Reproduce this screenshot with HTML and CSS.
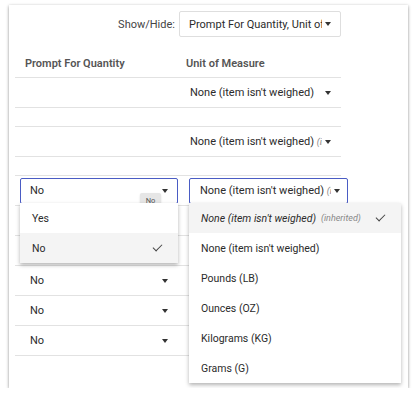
FILE: index.html
```html
<!DOCTYPE html>
<html>
    <head>
        <title>
            Item columns
        </title>
        <link rel="stylesheet" href="styles.css">
    </head>
    <body>

        <div class="card">
            <div class="toolbar">
                <span class="toolbar-label">Show/Hide:</span>
                <div class="picker">
                    <span class="picker-text">Prompt For Quantity, Unit of</span>
                    <span class="caret"></span>
                </div>
            </div>

            <div class="grid">
                <div class="row head">
                    <div class="cell">Prompt For Quantity</div>
                    <div class="cell unit-head">Unit of Measure</div>
                </div>

                <div class="row">
                    <div class="cell"></div>
                    <div class="cell unit">
                        <span class="unit-text">None (item isn't weighed)</span>
                        <span class="caret"></span>
                    </div>
                </div>
                <div class="row short"></div>

                <div class="row">
                    <div class="cell"></div>
                    <div class="cell unit">
                        <span class="unit-text">None (item isn't weighed) <i class="hint">(inherited)</i></span>
                        <span class="caret"></span>
                    </div>
                </div>
                <div class="row short"></div>

                <div class="row active">
                    <div class="select focused qty">
                        <span class="select-text">No</span>
                        <span class="caret"></span>
                    </div>
                    <div class="select focused measure">
                        <span class="select-text">None (item isn't weighed) <i class="hint">(inherited)</i></span>
                        <span class="caret"></span>
                    </div>

                    <div class="tip">No</div>

                    <div class="menu qty-menu">
                        <div class="menu-item">Yes</div>
                        <div class="menu-item picked">No <span class="check"></span></div>
                    </div>

                    <div class="menu measure-menu">
                        <div class="menu-item picked"><i>None (item isn't weighed)</i> <i class="inherited">(inherited)</i> <span class="check"></span></div>
                        <div class="menu-item">None (item isn't weighed)</div>
                        <div class="menu-item">Pounds (LB)</div>
                        <div class="menu-item">Ounces (OZ)</div>
                        <div class="menu-item">Kilograms (KG)</div>
                        <div class="menu-item">Grams (G)</div>
                    </div>
                </div>

                <div class="row"></div>
                <div class="row"></div>

                <div class="row">
                    <div class="select qty"><span class="select-text">No</span><span class="caret"></span></div>
                </div>
                <div class="row">
                    <div class="select qty"><span class="select-text">No</span><span class="caret"></span></div>
                </div>
                <div class="row">
                    <div class="select qty"><span class="select-text">No</span><span class="caret"></span></div>
                </div>
            </div>
        </div>

    </body>
</html>
```

FILE: styles.css
```css
body {
    margin: 0;
    background-color: white;
    font-family: Roboto, "Liberation Sans", sans-serif;
    font-size: 11px;
    color: #2b2b2b;
}
.card {
    box-sizing: border-box;
    width: 399px;
    height: 383px;
    margin: 5px 0 0 9px;
    padding: 6px 0 0 6px;
    background-color: white;
    box-shadow: 0 1px 3px rgba(0, 0, 0, 0.45);
}
.toolbar {
    display: flex;
    align-items: center;
    justify-content: flex-end;
    width: 326px;
    height: 26px;
}
.toolbar-label {
    color: #444;
    margin-right: 4px;
}
.picker {
    box-sizing: border-box;
    display: flex;
    align-items: center;
    width: 162px;
    height: 26px;
    padding: 0 9px 0 9px;
    border: 1px solid #dedede;
    border-radius: 2px;
}
.picker-text {
    flex: 1;
    white-space: nowrap;
    overflow: hidden;
}
.caret {
    flex-shrink: 0;
    width: 0;
    height: 0;
    border-left: 3px solid transparent;
    border-right: 3px solid transparent;
    border-top: 4px solid #333;
    margin-left: 3px;
}
.grid {
    width: 326px;
    margin-top: 12px;
}
.row {
    box-sizing: border-box;
    display: grid;
    grid-template-columns: 169px 157px;
    align-items: center;
    height: 30px;
    border-bottom: 1px solid #e2e2e2;
}
.row.short {
    height: 19px;
}
.row.head {
    height: 29px;
    font-weight: 600;
    color: #555;
}
.cell {
    padding-left: 10px;
}
.unit-head {
    padding-left: 2px;
}
.unit {
    display: flex;
    align-items: center;
    padding-left: 6px;
    width: 141px;
}
.unit-text {
    flex: 1;
    white-space: nowrap;
    overflow: hidden;
}
.hint {
    color: #888;
    font-size: 9px;
}
.active {
    position: relative;
    display: flex;
}
.select {
    box-sizing: border-box;
    flex-shrink: 0;
    display: flex;
    align-items: center;
    height: 26px;
    padding: 0 9px;
    border: 1px solid transparent;
    border-radius: 2px;
}
.select.qty {
    width: 158px;
    margin-left: 5px;
}
.select.measure {
    width: 159px;
    margin-left: 11px;
    padding-left: 10px;
    padding-right: 7px;
}
.select.focused {
    border-color: #4a5cc4;
}
.select-text {
    flex: 1;
    white-space: nowrap;
    overflow: hidden;
}
.tip {
    position: absolute;
    left: 125px;
    top: 17px;
    width: 21px;
    height: 15px;
    line-height: 15px;
    text-align: center;
    font-size: 7.5px;
    color: #555;
    background-color: #e6e6e6;
    border-radius: 2px;
    box-shadow: 0 1px 2px rgba(0, 0, 0, 0.15);
}
.menu {
    position: absolute;
    top: 27px;
    background-color: white;
    box-shadow: 0 2px 4px rgba(0, 0, 0, 0.3);
    z-index: 2;
}
.qty-menu {
    left: 5px;
    width: 158px;
}
.measure-menu {
    left: 174px;
    width: 212px;
}
.menu-item {
    display: flex;
    align-items: center;
    height: 30px;
    padding-left: 12px;
    font-size: 10.5px;
    white-space: nowrap;
}
.menu-item.picked {
    background-color: #f4f4f4;
}
.inherited {
    color: #888;
    font-size: 9px;
    margin-left: 5px;
}
.check {
    width: 8px;
    height: 4px;
    border-left: 1.3px solid #444;
    border-bottom: 1.3px solid #444;
    transform: rotate(-45deg);
    margin-left: auto;
    margin-right: 16px;
    margin-top: -3px;
}
```
